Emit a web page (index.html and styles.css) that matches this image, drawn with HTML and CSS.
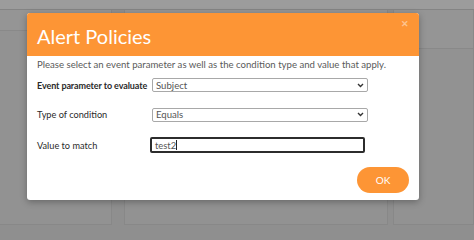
FILE: index.html
```html
<!DOCTYPE html>
<html>
<head>
<meta charset="utf-8">
<link rel="stylesheet" href="styles.css">
</head>
<body>
<div class="page">
  <div class="topbar"></div>
  <div class="cards">
    <div class="card card-a"><div class="card-head short"></div></div>
    <div class="card card-b"><div class="card-head"></div></div>
    <div class="card card-c"><div class="card-head tall"></div></div>
  </div>
</div>
<div class="modal">
  <div class="modal-header">
    <h1 class="modal-title">Alert Policies</h1>
    <span class="modal-close">&#x2715;</span>
  </div>
  <div class="modal-body">
    <p class="intro">Please select an event parameter as well as the condition type and value that apply.</p>
    <div class="form-row">
      <label class="label strong">Event parameter to evaluate</label>
      <div class="select"><span>Subject</span><svg class="chev" viewBox="0 0 8 6" width="7" height="5"><path d="M1 1.2 L4 4.3 L7 1.2" fill="none" stroke="#333" stroke-width="1.6"/></svg></div>
    </div>
    <div class="form-row">
      <label class="label">Type of condition</label>
      <div class="select"><span>Equals</span><svg class="chev" viewBox="0 0 8 6" width="7" height="5"><path d="M1 1.2 L4 4.3 L7 1.2" fill="none" stroke="#333" stroke-width="1.6"/></svg></div>
    </div>
    <div class="form-row">
      <label class="label">Value to match</label>
      <div class="input"><span>test2</span><span class="caret"></span></div>
    </div>
    <div class="actions">
      <button class="btn-ok">OK</button>
    </div>
  </div>
</div>
</body>
</html>
```

FILE: styles.css
```css
html, body {
  margin: 0;
  padding: 0;
}
body {
  width: 474px;
  height: 225px;
  overflow: hidden;
  background: #8f8f8f;
  font-family: "Lato", "Noto Sans", sans-serif;
  position: relative;
}
.topbar {
  height: 9px;
  background: #9c9c9c;
  border-bottom: 1px solid #848484;
}
.cards {
  display: flex;
  height: 215px;
}
.card {
  background: #929292;
  border: 1px solid #888;
  border-top: none;
}
.card-a { width: 112px; margin-left: -2px; }
.card-b { width: 262px; margin-left: 12px; }
.card-c { flex: 1; margin-left: 5px; }
.card-head {
  height: 20px;
  border-bottom: 1px solid #898989;
  background: #959595;
}
.card-head.tall { height: 38px; }

.modal {
  position: absolute;
  left: 27px;
  top: 13px;
  width: 392px;
  height: 187px;
  background: #fff;
  border-radius: 3px;
  overflow: hidden;
  box-shadow: 0 2px 7px rgba(0,0,0,0.3);
}
.modal-header {
  height: 43px;
  background: #fd9535;
  display: flex;
  align-items: center;
  padding-left: 10px;
  position: relative;
}
.modal-title {
  margin: 0;
  color: #fff;
  font-size: 20px;
  font-weight: 400;
  padding-top: 3px;
}
.modal-close {
  position: absolute;
  right: 10px;
  top: 5px;
  color: rgba(255,255,255,0.45);
  font-size: 9px;
  font-weight: 700;
}
.modal-body {
  padding: 0 10px;
}
.intro {
  margin: 3px 0 7px;
  font-size: 9.6px;
  color: #5a5a5a;
  line-height: 12px;
}
.form-row {
  display: grid;
  grid-template-columns: 115px 1fr;
  align-items: center;
  height: 14px;
  margin-bottom: 15.5px;
}
.label {
  font-size: 9.2px;
  color: #2a2a2a;
  white-space: nowrap;
}
.label.strong {
  font-weight: 700;
  font-size: 9px;
  letter-spacing: -0.1px;
}
.select {
  height: 12px;
  border: 1px solid #a8a8a8;
  border-radius: 2px;
  display: flex;
  align-items: center;
  justify-content: space-between;
  padding: 0 3px;
  font-size: 9.6px;
  color: #555;
  width: 208px;
}
.chev { display: block; }
.input {
  margin-left: -2px;
  width: 205px;
  height: 12px;
  border: 2px solid #2c2c2c;
  border-radius: 2px;
  display: flex;
  align-items: center;
  padding: 0 3px;
  font-size: 9.4px;
  color: #555;
}
.caret {
  width: 1px;
  height: 10px;
  background: #222;
}
.actions {
  display: flex;
  justify-content: flex-end;
  margin-top: 3.5px;
}
.btn-ok {
  width: 52px;
  height: 26px;
  border: none;
  border-radius: 13px;
  background: #fd9535;
  color: #fff;
  font-family: "Lato", sans-serif;
  font-size: 10px;
  padding: 0;
}
```
